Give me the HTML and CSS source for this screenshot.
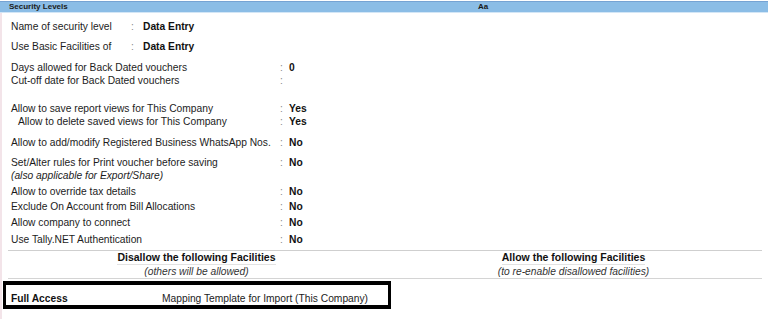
FILE: index.html
```html
<!DOCTYPE html>
<html>
<head>
<meta charset="utf-8">
<link rel="stylesheet" href="styles.css">
</head>
<body>
<div class="titlebar">
  <span class="title">Security Levels</span>
  <span class="aa">Aa</span>
</div>
<div class="main">
  <div class="fields">
    <div class="row short"><span class="label">Name of security level</span><span class="colon">:</span><span class="value">Data Entry</span></div>
    <div class="row short m7"><span class="label">Use Basic Facilities of</span><span class="colon">:</span><span class="value">Data Entry</span></div>

    <div class="row m8"><span class="label">Days allowed for Back Dated vouchers</span><span class="colon">:</span><span class="value">0</span></div>
    <div class="row"><span class="label">Cut-off date for Back Dated vouchers</span><span class="colon">:</span><span class="value"></span></div>

    <div class="row m15"><span class="label">Allow to save report views for This Company</span><span class="colon">:</span><span class="value">Yes</span></div>
    <div class="row indent"><span class="label">Allow to delete saved views for This Company</span><span class="colon">:</span><span class="value">Yes</span></div>

    <div class="row m8"><span class="label">Allow to add/modify Registered Business WhatsApp Nos.</span><span class="colon">:</span><span class="value">No</span></div>

    <div class="row m7"><span class="label">Set/Alter rules for Print voucher before saving</span><span class="colon">:</span><span class="value">No</span></div>
    <div class="row"><span class="label note">(also applicable for Export/Share)</span></div>
    <div class="row m3"><span class="label">Allow to override tax details</span><span class="colon">:</span><span class="value">No</span></div>
    <div class="row m2"><span class="label">Exclude On Account from Bill Allocations</span><span class="colon">:</span><span class="value">No</span></div>
    <div class="row m3"><span class="label">Allow company to connect</span><span class="colon">:</span><span class="value">No</span></div>
    <div class="row m4"><span class="label">Use Tally.NET Authentication</span><span class="colon">:</span><span class="value">No</span></div>
  </div>

  <div class="facilities">
    <div class="col">
      <div class="col-head">
        <span class="heading">Disallow the following Facilities</span>
        <span class="sub">(others will be allowed)</span>
      </div>
      <div class="cell selected">
        <span class="cell-name">Full Access</span>
        <span class="cell-desc">Mapping Template for Import (This Company)</span>
      </div>
    </div>
    <div class="col">
      <div class="col-head">
        <span class="heading">Allow the following Facilities</span>
        <span class="sub">(to re-enable disallowed facilities)</span>
      </div>
    </div>
  </div>
</div>
</body>
</html>
```

FILE: styles.css
```css
html, body {
  margin: 0;
  padding: 0;
  background: #ffffff;
}
body {
  width: 768px;
  height: 319px;
  overflow: hidden;
  font-family: "Liberation Sans", Arial, sans-serif;
  font-size: 10.25px;
  color: #1c1c1c;
}

.titlebar {
  margin-top: 1px;
  height: 10px;
  border-top: 1px solid #76a3d3;
  border-bottom: 1px solid #d3e6f6;
  background: #8bbde6;
  display: flex;
  align-items: center;
  font-size: 8px;
  font-weight: bold;
  line-height: 10px;
  color: #1a1a1a;
}
.title {
  width: 469px;
  padding-left: 9px;
}
.aa {
  font-size: 8px;
}

.main {
  border-left: 2px solid #f3e4e9;
  height: 306px;
  box-sizing: border-box;
}

.fields {
  padding-top: 7px;
}
.row {
  display: flex;
  height: 13px;
  line-height: 13px;
  white-space: nowrap;
}
.label {
  box-sizing: border-box;
  width: 278px;
  padding-left: 9px;
}
.short .label {
  width: 129px;
}
.indent .label {
  padding-left: 16px;
}
.colon {
  width: 9px;
  color: #8a8a8a;
}
.short .colon {
  width: 12px;
}
.value {
  font-weight: bold;
  color: #111;
}
.note {
  font-style: italic;
}
.m2 { margin-top: 2px; }
.m3 { margin-top: 3px; }
.m4 { margin-top: 4px; }
.m7 { margin-top: 7px; }
.m8 { margin-top: 8px; }
.m15 { margin-top: 15px; }

.facilities {
  margin-top: 4px;
  margin-left: 6px;
  width: 754px;
  border-top: 1px solid #cfcfcf;
  display: flex;
}
.col {
  flex: 1;
  display: flex;
  flex-direction: column;
}
.col-head {
  display: flex;
  flex-direction: column;
  align-items: center;
  border-bottom: 1px solid #d4d4d4;
  line-height: 13px;
}
.heading {
  font-weight: bold;
  font-size: 10.5px;
  color: #111;
  border-bottom: 1px solid #e2e2e2;
}
.sub {
  font-style: italic;
  color: #333;
}
.cell {
  display: flex;
  line-height: 13px;
  white-space: nowrap;
}
.selected {
  margin: 2px -6px 0 -5px;
  height: 13px;
  padding: 7px 0 0 5px;
  border: 3px solid #000;
  border-top-width: 4px;
  border-bottom-width: 4px;
}
.cell-name {
  width: 151px;
  font-weight: bold;
  color: #111;
}
.cell-desc {
  color: #1c1c1c;
}
```
